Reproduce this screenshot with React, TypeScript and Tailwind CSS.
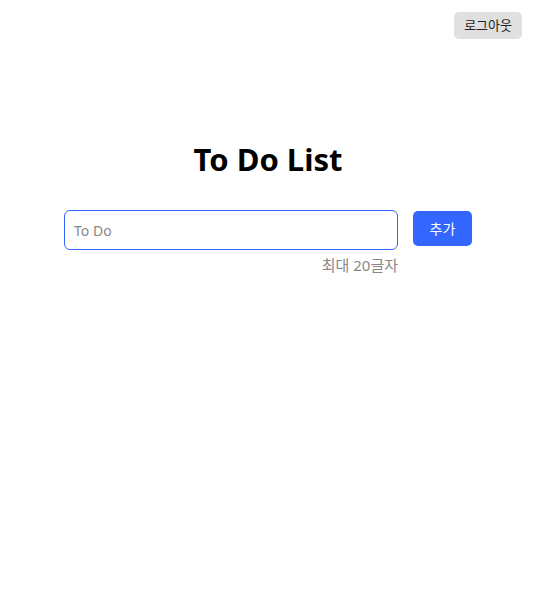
import { useState } from 'react';

export default function App() {
  const [todo, setTodo] = useState('');

  return (
    <div className="min-h-[602px] w-full bg-white font-['Noto_Sans','Noto_Sans_CJK_KR',sans-serif]">
      <div className="flex justify-end pt-3 pr-[14px]">
        <button className="h-[27px] rounded-[5px] bg-[#e0e0e0] px-[10px] text-[13px] text-[#222]">
          로그아웃
        </button>
      </div>

      <h1 className="mt-[100px] text-center text-[31px] font-bold leading-[40px] text-black">
        To Do List
      </h1>

      <div className="mt-[31px] flex justify-center gap-[15px]">
        <div className="flex flex-col items-end">
          <input
            autoFocus
            type="text"
            maxLength={20}
            placeholder="To Do"
            value={todo}
            onChange={(e) => setTodo(e.target.value)}
            className="h-10 w-[334px] rounded-md border border-[#3366ff] px-[9px] text-sm text-[#333] outline-none placeholder:text-[#888]"
          />
          <span className="mt-[4px] text-[15px] text-[#888]">최대 20글자</span>
        </div>
        <button className="mt-px h-[35px] w-[59px] rounded-[5px] bg-[#3366ff] text-sm text-white">
          추가
        </button>
      </div>
    </div>
  );
}
